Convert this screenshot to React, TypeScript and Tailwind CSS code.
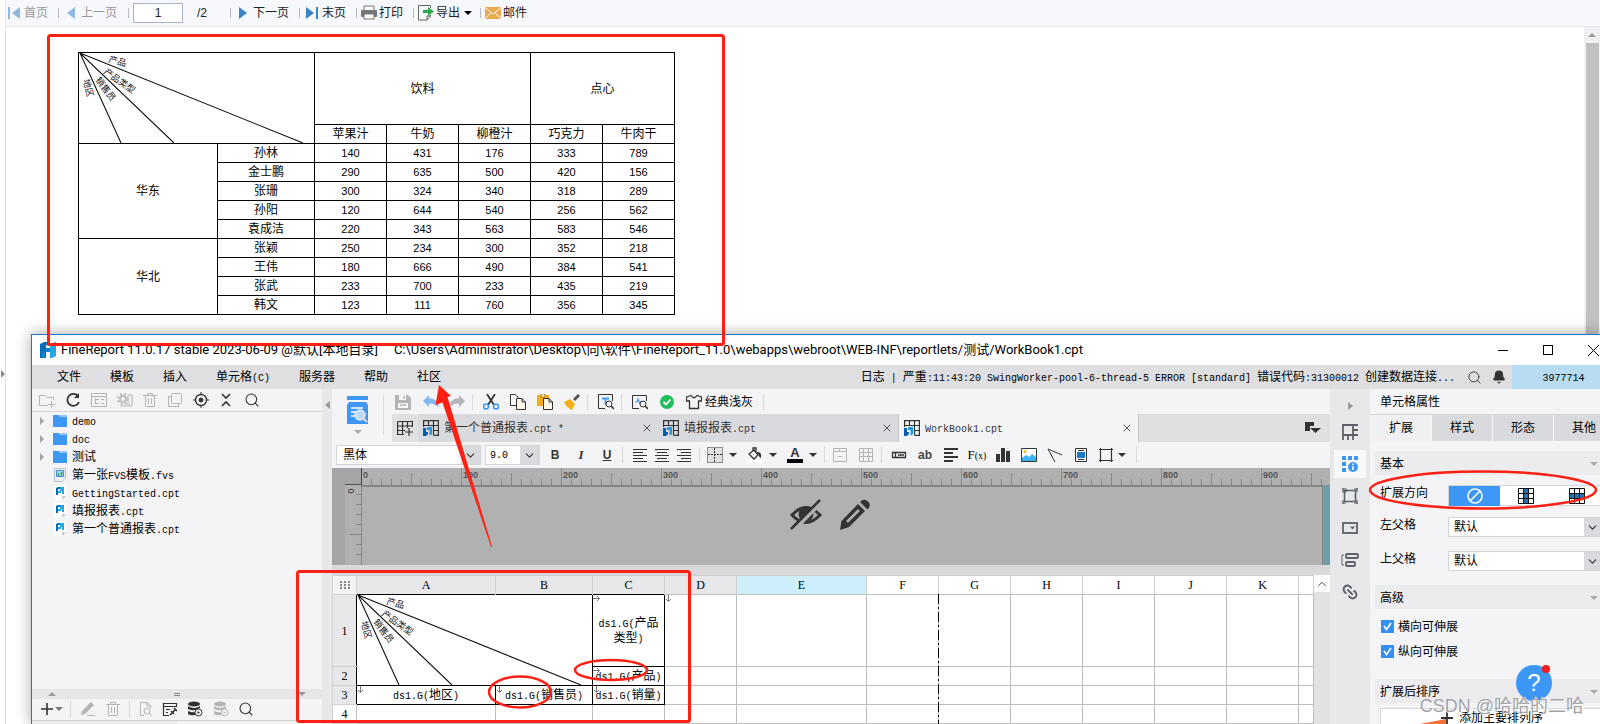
import type { ReactNode } from "react";
import clsx from "clsx";
import { Bell, ChevronDown, ChevronUp, Link2, Search, X } from "lucide-react";

const SIM = "font-['Liberation_Sans','Noto_Sans_CJK_SC',sans-serif]";

const PEOPLE = [
  { region: "华东", span: 5, name: "孙林", values: [140, 431, 176, 333, 789] },
  { name: "金士鹏", values: [290, 635, 500, 420, 156] },
  { name: "张珊", values: [300, 324, 340, 318, 289] },
  { name: "孙阳", values: [120, 644, 540, 256, 562] },
  { name: "袁成洁", values: [220, 343, 563, 583, 546] },
  { region: "华北", span: 4, name: "张颖", values: [250, 234, 300, 352, 218] },
  { name: "王伟", values: [180, 666, 490, 384, 541] },
  { name: "张武", values: [233, 700, 233, 435, 219] },
  { name: "韩文", values: [123, 111, 760, 356, 345] },
];

const MENUS = ["文件", "模板", "插入", "单元格(C)", "服务器", "帮助", "社区"];

const FILES = [
  { kind: "folder", name: "demo" },
  { kind: "folder", name: "doc" },
  { kind: "folder", name: "测试" },
  { kind: "fvs", name: "第一张FVS模板.fvs" },
  { kind: "cpt", name: "GettingStarted.cpt" },
  { kind: "cpt", name: "填报报表.cpt" },
  { kind: "cpt", name: "第一个普通报表.cpt" },
];

// Latin runs sit in a half-width monospace next to 12px Chinese glyphs
function Mix({ text }: { text: string }) {
  return (
    <span className="whitespace-pre">
      {text.split(/([!-~ ]+)/).map((part, i) =>
        i % 2 ? (
          <span key={i} className="font-['Liberation_Mono',monospace] text-[10px] leading-none">{part}</span>
        ) : (
          part
        ),
      )}
    </span>
  );
}

function Glyph({ children, className }: { children: ReactNode; className?: string }) {
  return (
    <svg viewBox="0 0 16 16" fill="none" stroke="#333" className={clsx("size-4 shrink-0", className)} aria-hidden="true">
      {children}
    </svg>
  );
}

function Tool({ label, w, children }: { label: string; w: string; children: ReactNode }) {
  return (
    <button type="button" aria-label={label} className={clsx("flex h-5 shrink-0 items-center justify-center", w)}>
      {children}
    </button>
  );
}

function Sep({ className = "h-4 bg-[#d8d8da]" }: { className?: string }) {
  return <span className={clsx("w-px shrink-0", className)} />;
}

function Caret({ className = "border-t-[#333]" }: { className?: string }) {
  return <span className={clsx("size-0 shrink-0 border-x-4 border-t-4 border-x-transparent", className)} />;
}

function Bin() {
  return (
    <Glyph>
      <path d="M1 3.500 H15 M5.500 3 V1.500 H10.500 V3 M3.500 4 V14.500 H12.500 V4 M6.500 6 V12 M9.500 6 V12" stroke="#b5b5b8" />
    </Glyph>
  );
}

function Logo({ className }: { className?: string }) {
  return (
    <svg viewBox="0 0 16 16" className={className} aria-hidden="true">
      <path d="M0 2 L4 0 H7 V3 H6 V16 H0 Z" fill="#0a6cb8" />
      <path d="M7 1 H12 L16 0 V14 L12 16 H10 V10 H6 V6 H10 V4 H7 Z" fill="#1fa8e8" />
      <path d="M2 9 H6 V6 H10 V10 H5 V16 H2 Z" fill="#0f82d0" />
    </svg>
  );
}

function Slanted() {
  return (
    <svg viewBox="0 0 235 90" className="block h-[90px] w-[235px]" fontSize="9" fill="#111">
      <path d="M1 0 L42 90 M1 0 L95 90 M1 0 L224 90" stroke="#111" strokeWidth="1.1" />
      <text transform="translate(29 9) rotate(15)">产品</text>
      <text transform="translate(24 20) rotate(35)">产品类型</text>
      <text transform="translate(16 27) rotate(53)">销售员</text>
      <text transform="translate(4 27) rotate(75)">地区</text>
    </svg>
  );
}

function PageArrow({ bar, flip, dim }: { bar?: boolean; flip?: boolean; dim?: boolean }) {
  const fill = dim ? "#92b8e2" : "#3b82c8";
  return (
    <svg viewBox={bar ? "0 0 12 12" : "0 0 8 12"} className={clsx("h-3 shrink-0", bar ? "w-3" : "w-2", flip && "-scale-x-100")} aria-hidden="true">
      <path d="M0 0 L8 6 L0 12 Z" fill={fill} />
      {bar && <rect x="10" y="0" width="2" height="12" fill={fill} />}
    </svg>
  );
}

function PreviewBar() {
  const sep = <Sep className="h-2.5 bg-[#b8babf]" />;
  return (
    <div className="ml-[5px] flex h-[27px] items-center border-b border-l border-[#e4e6ea] bg-[#f6f8fb] pl-0.5 text-xs text-[#222]">
      <button type="button" className="flex w-[50px] items-center gap-1 text-[#999]"><PageArrow bar flip dim />首页</button>
      {sep}
      <button type="button" className="ml-2 flex w-[61px] items-center gap-1.5 text-[#999]"><PageArrow flip dim />上一页</button>
      {sep}
      <input aria-label="页码" defaultValue="1" className="ml-1 h-5 w-[50px] border border-[#a9b1c9] bg-white text-center text-xs" />
      <span className="ml-3.5 w-[33px]">/2</span>
      {sep}
      <button type="button" className="ml-2 flex w-[60px] items-center gap-1.5"><PageArrow />下一页</button>
      {sep}
      <button type="button" className="ml-1.5 flex w-[50px] items-center gap-1"><PageArrow bar />末页</button>
      {sep}
      <button type="button" className="ml-1 flex w-[52px] items-center gap-0.5">
        <Glyph>
          <path d="M3 5 V1 H13 V5" stroke="#777" />
          <rect x="0" y="5" width="16" height="7" rx="1" fill="#777" stroke="none" />
          <rect x="3" y="9" width="10" height="5" fill="#fff" stroke="#777" />
        </Glyph>
        打印
      </button>
      {sep}
      <button type="button" className="ml-1 flex w-[62px] items-center gap-0.5">
        <Glyph>
          <path d="M12.500 10 V11 L9 15 H.5 V.5 H12.500 V3 M9 15 V11 H13" stroke="#666" />
          <path d="M5 5 H10 V2 L16 6.500 L10 11 V8 H5 Z" fill="#2faa4a" stroke="none" />
        </Glyph>
        导出
        <Caret className="ml-0.5 border-t-black" />
      </button>
      {sep}
      <button type="button" className="ml-1 flex items-center gap-0.5">
        <Glyph>
          <rect x="0" y="2" width="16" height="12" fill="#eaa94c" stroke="none" />
          <path d="M0 2.500 L8 9 L16 2.500 M0 13.500 L6 8 M16 13.500 L10 8" stroke="#fff" />
        </Glyph>
        邮件
      </button>
    </div>
  );
}

function ReportTable() {
  const cell = "border border-black p-0 text-center font-normal";
  return (
    <table className="w-[597px] table-fixed border-collapse text-xs leading-4 text-black">
      <colgroup>
        <col className="w-[139px]" />
        <col className="w-[97px]" />
        {[0, 1, 2, 3, 4].map(i => <col key={i} className="w-[72px]" />)}
      </colgroup>
      <thead>
        <tr className="h-[72px]">
          <th colSpan={2} rowSpan={2} className={cell}><Slanted /></th>
          <th colSpan={3} className={cell}>饮料</th>
          <th colSpan={2} className={cell}>点心</th>
        </tr>
        <tr className="h-[19px]">
          {["苹果汁", "牛奶", "柳橙汁", "巧克力", "牛肉干"].map(p => <th key={p} className={cell}>{p}</th>)}
        </tr>
      </thead>
      <tbody>
        {PEOPLE.map(p => (
          <tr key={p.name} className="h-[19px]">
            {p.region && <th rowSpan={p.span} className={cell}>{p.region}</th>}
            <td className={cell}>{p.name}</td>
            {p.values.map((v, i) => <td key={i} className={clsx(cell, "text-[11px]")}>{v}</td>)}
          </tr>
        ))}
      </tbody>
    </table>
  );
}

function FileIcon({ kind }: { kind: string }) {
  if (kind === "folder") {
    return (
      <Glyph>
        <path d="M1 2 H7 L8 4 H15 V14 H1 Z" fill="#3d97f7" stroke="none" />
        <path d="M8 3 H15" stroke="#3d97f7" />
      </Glyph>
    );
  }
  if (kind === "fvs") {
    return (
      <Glyph>
        <path d="M2.500 1.500 H13.500 V11 L10 14.500 H2.500 Z" fill="#eef1f3" stroke="#b9c0c6" />
        <path d="M4.500 3.500 H11.500 V9.500 H4.500 Z" fill="#a9d8f5" stroke="#3f8fd0" />
        <path d="M6.500 9 V6 M9.500 9 V5" stroke="#3aa757" strokeWidth="1.500" />
      </Glyph>
    );
  }
  return (
    <Glyph>
      <path d="M2 0 H14 V11 L10 15 H2 Z" fill="#fff" stroke="none" />
      <path d="M4 3 L6 2 H8 V4 H6 V10 H4 Z" fill="#0a6cb8" stroke="none" />
      <path d="M8 2 H12 V9 H10 V6 H8 Z M6 6 H9 V8 H6 Z" fill="#1fa8e8" stroke="none" />
      <path d="M10 15 V11 H14 Z" fill="#c9ccd0" stroke="none" />
    </Glyph>
  );
}

function FilePanel() {
  return (
    <aside className="flex w-[290px] shrink-0 flex-col bg-[#f4f4f7]">
      <div className="flex h-[23px] items-center border-b border-[#d5d5d8] pl-0.5">
        <Tool label="新建文件夹" w="w-[26px]">
          <Glyph><path d="M9 13.500 H.5 V3.500 H6 L8 5.500 H14.500 V8 M12.500 9 V16 M9 12.500 H16" stroke="#b5b5b8" /></Glyph>
        </Tool>
        <Tool label="刷新" w="w-[26px]">
          <Glyph><path d="M13 4 A6 6 0 1 0 14 10" strokeWidth="1.8" /><path d="M14 1 V6 H9 Z" fill="#333" stroke="none" /></Glyph>
        </Tool>
        <Tool label="重命名" w="w-[26px]">
          <Glyph><path d="M.5 1.500 H15.500 V14.500 H.5 Z M.5 4.500 H15.500 M4.500 6 V12 M4.500 7.500 H8 M4.500 11.500 H8 M10 7.500 H13 M10 11.500 H13" stroke="#b5b5b8" /></Glyph>
        </Tool>
        <Tool label="设置" w="w-[26px]">
          <Glyph>
            <circle cx="6" cy="7" r="3" stroke="#b5b5b8" strokeWidth="1.5" />
            <circle cx="6" cy="7" r="5" stroke="#b5b5b8" strokeWidth="2" strokeDasharray="2 2" />
            <path d="M11 3 H15 V14 H3 M11 9 V11 M9 12 H13" stroke="#b5b5b8" />
          </Glyph>
        </Tool>
        <Tool label="删除" w="w-[24px]"><Bin /></Tool>
        <Tool label="复制" w="w-[26px]">
          <Glyph><rect x="4.500" y="1.500" width="10" height="10" rx="1" stroke="#b5b5b8" /><path d="M4 4.500 H1.500 V14.500 H11.500 V12" stroke="#b5b5b8" /></Glyph>
        </Tool>
        <Tool label="定位" w="w-[25px]">
          <Glyph><circle cx="8" cy="8" r="5.500" strokeWidth="1.400" /><circle cx="8" cy="8" r="2" fill="#333" /><path d="M8 0 V3 M8 13 V16 M0 8 H3 M13 8 H16" /></Glyph>
        </Tool>
        <Tool label="折叠" w="w-[26px]">
          <Glyph><path d="M4 2 L8 6 L12 2 M4 14 L8 10 L12 14" strokeWidth="1.600" /></Glyph>
        </Tool>
        <Tool label="搜索" w="w-[26px]"><Search size={16} strokeWidth={1.6} color="#333" /></Tool>
      </div>
      <ul className="min-h-0 flex-1 overflow-hidden text-xs text-black">
        {FILES.map(f => (
          <li key={f.name} className="flex h-[18px] items-center">
            <span className="flex w-5 justify-center">
              {f.kind === "folder" && <span className="size-0 border-y-4 border-l-4 border-y-transparent border-l-[#a5a5a8]" />}
            </span>
            <FileIcon kind={f.kind} />
            <span className="ml-1"><Mix text={f.name} /></span>
          </li>
        ))}
      </ul>
      <div className="flex h-2.5 items-center justify-between bg-[#e6e6e8] px-4">
        <Caret className="rotate-180 border-t-[#999]" />
        <span className="h-[3px] w-1.5 border-y border-[#888]" />
        <Caret className="border-t-[#999]" />
      </div>
      <div className="flex h-[22px] items-center border-b border-[#cfcfd2] pb-px pl-1.5">
        <Tool label="添加" w="w-[26px]">
          <Glyph className="-mr-0.5"><path d="M8 2 V14 M2 8 H14" strokeWidth="1.600" /></Glyph>
          <Caret className="ml-0.5 border-t-[#777]" />
        </Tool>
        <Sep className="ml-1.5 h-4 bg-[#d8d8da]" />
        <Tool label="编辑" w="ml-1 w-[26px]">
          <Glyph><path d="M1 14 L2 10 L11 1 L14 4 L5 13 Z" fill="#b5b5b8" stroke="none" /><path d="M7 14.500 H15" stroke="#b5b5b8" /></Glyph>
        </Tool>
        <Tool label="删除数据集" w="w-[24px]"><Bin /></Tool>
        <Sep className="ml-1 h-4 bg-[#d8d8da]" />
        <Tool label="预览" w="ml-1 w-[24px]">
          <Glyph><path d="M6 14.500 H2.500 V1.500 H9 L13 5 V7 M9 1.500 V5 H13" stroke="#b5b5b8" /><circle cx="9" cy="10" r="3" stroke="#b5b5b8" /><path d="M11 12 L14 15" stroke="#b5b5b8" /></Glyph>
        </Tool>
        <Tool label="连接" w="w-[24px]">
          <Glyph><path d="M7 14.500 H1.500 V2.500 H14.500 V6 M1.500 5.500 H14.500 M4 8.500 H8 M4 11.500 H6" strokeWidth="1.200" /><path d="M8 14 L14 8 M9 10 L12 13 M12 7 L15 10" strokeWidth="1.600" /></Glyph>
        </Tool>
        {["#333", "#b5b5b8"].map(c => (
          <Tool key={c} label="数据库" w="w-[26px]">
            <Glyph>
              <ellipse cx="7" cy="3" rx="6" ry="2.500" fill={c} stroke="none" />
              <path d="M1 5 Q7 9 13 5 V7 Q7 11 1 8 Z M1 10 Q6 12 8 11 V14 Q3 15 1 13 Z" fill={c} stroke="none" />
              <circle cx="11.500" cy="11.500" r="3.500" fill="#f4f4f7" stroke={c} />
              <path d="M10.500 10 L13 11.500 L10.500 13 Z" fill={c} stroke="none" />
            </Glyph>
          </Tool>
        ))}
        <Tool label="查找" w="w-[24px]"><Search size={16} strokeWidth={1.6} color="#333" /></Tool>
      </div>
      <div className="h-[3px] w-[145px] bg-[#ececee]" />
    </aside>
  );
}

function SheetIcon() {
  return (
    <Glyph className="size-3.5">
      <path d="M.6 7 V.6 H15.400 V15.400 H11 M.6 5.500 H15.400 M5.500 .6 V6 M10.500 .6 V15.400 M10.500 10.500 H15.400" strokeWidth="1.200" />
      <path d="M0 8 H3 V12 H5 V14 L3 16 H0 Z" fill="#0a5cb0" stroke="none" />
      <path d="M4 7 H9 V14 L6.500 16 V10 H4 Z" fill="#1f9ae0" stroke="none" />
    </Glyph>
  );
}

function DocTab({ name, active, width }: { name: string; active?: boolean; width: string }) {
  return (
    <div className={clsx("flex shrink-0 items-center pl-[5px] pr-[5px] text-xs", width, active ? "border-x border-[#c5c5c8] bg-[#f4f4f7]" : "bg-[#d9dadd]")}>
      <SheetIcon />
      <button type="button" className="ml-[5px] flex-1 text-left text-[#333]"><Mix text={name} /></button>
      <button type="button" aria-label="关闭"><X size={12} strokeWidth={1.8} color="#444" /></button>
    </div>
  );
}

function MainTools() {
  return (
    <div className="flex h-[53px] bg-[#f4f4f7]">
      <button type="button" aria-label="预览模板" className="flex w-[51px] shrink-0 flex-col items-center gap-1.5 pt-[7px]">
        <svg viewBox="0 0 21 28" className="h-7 w-[21px]" aria-hidden="true">
          <path d="M0 0 H21 V4 H0 Z M2 6 H19 L21 9 V28 H0 V9 Z" fill="#3d97f7" />
          <path d="M4 12 H16 M4 16 H9 M4 20 H8" stroke="#fff" strokeWidth="1.500" />
          <circle cx="13" cy="19" r="5" fill="#bcdcff" stroke="#e8e8e8" strokeWidth="1.500" />
          <path d="M16 22 L20 26" stroke="#ddd" strokeWidth="2" />
        </svg>
        <Caret className="border-t-[#aaa]" />
      </button>
      <Sep className="mt-1.5 h-10 bg-[#d8d8da]" />
      <div className="ml-2 flex min-w-0 flex-1 flex-col">
        <div className="flex h-[25px] shrink-0 items-center">
          <Tool label="保存" w="w-[22px]">
            <Glyph><path d="M0 1 H13 L16 4 V16 H0 Z" fill="#b5b5b8" stroke="none" /><path d="M4 1 H11 V6 H4 Z M3 9 H13 V14 H3 Z" fill="#f4f4f7" stroke="none" /><path d="M9 2 V5 M5 11 H11" stroke="#b5b5b8" strokeWidth="1.500" /></Glyph>
          </Tool>
          <Tool label="撤销" w="ml-1.5 w-[22px]">
            <Glyph><path d="M0 7 L6 1 V4.500 Q15 4 16 14 Q12 9 6 9.500 V13 Z" fill="#7fb7f2" stroke="none" /></Glyph>
          </Tool>
          <Tool label="重做" w="ml-1 w-[22px]">
            <Glyph><path d="M16 7 L10 1 V4.500 Q1 4 0 14 Q4 9 10 9.500 V13 Z" fill="#b5b5b8" stroke="none" /></Glyph>
          </Tool>
          <Sep className="ml-1 h-4 bg-[#d8d8da]" />
          <Tool label="剪切" w="ml-1 w-[27px]">
            <Glyph><path d="M4 0 L11 11 M12 0 L5 11" strokeWidth="1.800" /><circle cx="3" cy="12.500" r="2.500" stroke="#3d97f7" strokeWidth="1.600" /><circle cx="13" cy="12.500" r="2.500" stroke="#3d97f7" strokeWidth="1.600" /></Glyph>
          </Tool>
          <Tool label="复制" w="w-[27px]">
            <Glyph><path d="M.5 .5 H5 L8 3 V11.500 H.5 Z" fill="#fff" /><path d="M6.500 4.500 H12 L15.500 8 V15.500 H6.500 Z" fill="#fff8e8" /><path d="M12 4.500 V8 H15.500" /></Glyph>
          </Tool>
          <Tool label="粘贴" w="w-[27px]">
            <Glyph><path d="M0 1 H12 V12 H0 Z" fill="#f5ad13" stroke="none" /><path d="M4 0 H8 V3 H4 Z" fill="#fff" stroke="#a87912" /><path d="M6.500 4.500 H12 L15.500 8 V15.500 H6.500 Z M12 4.500 V8 H15.500" fill="#fff8e8" /></Glyph>
          </Tool>
          <Tool label="格式刷" w="w-[27px]">
            <Glyph><path d="M15 1 L10 6" strokeWidth="3" stroke="#555" /><path d="M0 8 L6 5 L11 10 L8 16 Q3 14 0 8 Z" fill="#f5ad13" stroke="none" /></Glyph>
          </Tool>
          <Sep className="ml-0.5 h-4 bg-[#d8d8da]" />
          <Tool label="查找替换" w="ml-1 w-[27px]">
            <Glyph><path d="M7 14.500 H.5 V.5 H14.500 V7" /><path d="M4 4.500 H11 M7.500 4.500 V11" stroke="#3d97f7" strokeWidth="1.800" /><circle cx="11" cy="10" r="3" fill="#f4f4f7" /><path d="M13 12 L16 15" strokeWidth="1.600" /></Glyph>
          </Tool>
          <Sep className="ml-0.5 h-4 bg-[#d8d8da]" />
          <Tool label="性能" w="ml-1 w-[27px]">
            <Glyph><path d="M7 14.500 H.5 V1.500 H14.500 V7" /><path d="M3 8 H5 L6 5 L8 10 L9 7" stroke="#3d97f7" strokeWidth="1.200" /><circle cx="11" cy="10" r="3" fill="#f4f4f7" /><path d="M13 12 L16 15" strokeWidth="1.600" /></Glyph>
          </Tool>
          <Tool label="校验" w="w-[27px]">
            <Glyph><circle cx="8" cy="8" r="7" fill="#20bd5c" stroke="none" /><path d="M4.500 8 L7 10.500 L11.500 5.500" stroke="#fff" strokeWidth="1.800" /></Glyph>
          </Tool>
          <button type="button" className="ml-1.5 flex items-center gap-[3px] text-xs text-black">
            <Glyph><path d="M5 1.500 L.5 3 V7 H3.500 V14.500 H12.500 V7 H15.500 V3 L11 1.500 Q8 6 5 1.500 Z" strokeWidth="1.300" /></Glyph>
            经典浅灰
          </button>
          <Sep className="ml-2.5 h-4 bg-[#d8d8da]" />
        </div>
        <div className="flex h-7 bg-[#e0e0e2]">
          <Tool label="新建模板" w="w-[26px] h-7">
            <Glyph className="size-3.5"><path d="M.6 1.500 H15.400 V7 M.6 1.500 V14.500 H7 M.6 6 H15 M.6 10.500 H8 M5.500 1 V14 M10.500 1 V8 M12 8 V16 M8 12 H16" strokeWidth="1.200" /></Glyph>
          </Tool>
          <DocTab name="第一个普通报表.cpt *" width="w-[240px]" />
          <DocTab name="填报报表.cpt" width="w-[240px]" />
          <DocTab name="WorkBook1.cpt" width="w-[241px]" active />
          <Tool label="模板列表" w="ml-auto mr-2.5 mt-1 w-3.5">
            <Glyph className="size-3.5"><path d="M0 2 H9 V6 H5 V11 H0 Z M5 8 H16 L10.500 13 Z" fill="#333" stroke="none" /></Glyph>
          </Tool>
        </div>
      </div>
    </div>
  );
}

function FontBar() {
  const lines = ["M1 2.500 H15 M1 5.500 H11 M1 8.500 H15 M1 11.500 H11 M1 14.500 H15", "M1 2.500 H15 M3 5.500 H13 M1 8.500 H15 M3 11.500 H13 M1 14.500 H15", "M1 2.500 H15 M5 5.500 H15 M1 8.500 H15 M5 11.500 H15 M1 14.500 H15"];
  return (
    <div className="flex h-[26px] items-center bg-[#f4f4f7] pl-1">
      <label className="relative flex h-5 w-[145px] border border-[#d5d6da] bg-white">
        <select aria-label="字体" className="w-full appearance-none pl-1.5 text-xs leading-4 text-black"><option>黑体</option></select>
        <span className="pointer-events-none absolute inset-y-0 right-0 flex w-[19px] items-center justify-center bg-[#d9dadd]"><ChevronDown size={13} color="#333" /></span>
      </label>
      <label className="relative ml-1 flex h-5 w-[55px] border border-[#d5d6da] bg-white">
        <select aria-label="字号" className="w-full appearance-none pl-1 font-['Liberation_Mono',monospace] text-[10px] text-black"><option>9.0</option></select>
        <span className="pointer-events-none absolute inset-y-0 right-0 flex w-[19px] items-center justify-center bg-[#d9dadd]"><ChevronDown size={13} color="#333" /></span>
      </label>
      <button type="button" className="ml-0.5 w-[26px] text-xs font-bold text-[#333]">B</button>
      <button type="button" className="w-[26px] font-['Liberation_Serif',serif] text-[13px] font-bold italic text-[#333]">I</button>
      <button type="button" className="w-[26px] text-xs font-bold text-[#333] underline">U</button>
      <Sep className="ml-0.5 h-4 bg-[#d8d8da]" />
      <span className="w-1.5" />
      {lines.map((d, i) => <Tool key={d} label={["左对齐", "居中", "右对齐"][i]} w="w-[22px]"><Glyph><path d={d} strokeWidth="1.200" /></Glyph></Tool>)}
      <Sep className="ml-1 h-4 bg-[#d8d8da]" />
      <Tool label="边框" w="ml-2 w-7">
        <Glyph><path d="M.5 .5 H15.500 V15.500 H.5 Z" strokeDasharray="1 1" fill="#e2e2e4" /><path d="M7.500 1 V15 M1 7.500 H15" strokeDasharray="2 1" /></Glyph>
        <Caret className="ml-1.5 border-t-[#333]" />
      </Tool>
      <Tool label="背景" w="ml-3 w-7">
        <Glyph><path d="M2 7 L7 3 L11 8 L7 12 Z M6 5 V1 H9 V5" strokeWidth="1.300" /><path d="M10 5 Q15 4 14 11 Q12 10 11 7 Z" fill="#333" stroke="none" /><path d="M0 14.500 H16" stroke="#fff" strokeWidth="3" /></Glyph>
        <Caret className="ml-1.5 border-t-[#333]" />
      </Tool>
      <Tool label="文字颜色" w="ml-3 w-7">
        <span className="flex w-4 shrink-0 flex-col items-center border-b-4 border-black text-[13px] font-bold leading-3 text-[#333]">A</span>
        <Caret className="ml-1.5 border-t-[#333]" />
      </Tool>
      <Sep className="ml-2 h-4 bg-[#d8d8da]" />
      <Tool label="合并" w="ml-0.5 w-[26px]"><Glyph><path d="M1.500 1.500 H14.500 V14.500 H1.500 Z M1 4.500 H15 M6 9.500 H10 M7.500 1 V4" stroke="#b5b5b8" /></Glyph></Tool>
      <Tool label="拆分" w="w-[26px]"><Glyph><path d="M1.500 1.500 H14.500 V14.500 H1.500 Z M1 5.500 H15 M1 9.500 H15 M5.500 1 V15 M10.500 1 V15" stroke="#b5b5b8" /></Glyph></Tool>
      <Sep className="ml-0.5 h-4 bg-[#d8d8da]" />
      <Tool label="数据列" w="ml-1 w-[26px]"><Glyph><path d="M1.500 5.500 H14.500 V10.500 H1.500 Z M4.500 6 V10 M7 8 H13" strokeWidth="1.300" /></Glyph></Tool>
      <Tool label="普通文本" w="w-[26px]"><span className="text-xs font-bold text-[#444]">ab</span></Tool>
      <Tool label="富文本" w="w-[26px]"><Glyph><path d="M1 2 H15 M1 6 H10 M1 10 H15 M1 14 H10" strokeWidth="1.800" /></Glyph></Tool>
      <Tool label="公式" w="w-[26px]"><span className="font-['Liberation_Serif',serif] text-[13px] text-black">F<span className="text-[10px]">(x)</span></span></Tool>
      <Tool label="图表" w="w-[26px]"><Glyph><path d="M1 7 H5 V15 H1 Z M6 1 H10 V15 H6 Z M11 4 H15 V15 H11 Z" fill="#333" stroke="none" /></Glyph></Tool>
      <Tool label="图片" w="w-[26px]"><Glyph><path d="M.5 1.500 H15.500 V14.500 H.5 Z" fill="#fff" /><path d="M1 14 V11 L5 8 L8 10 L11 7 L15 10 V14 Z" fill="#39b5f5" stroke="none" /><circle cx="4" cy="4.500" r="1.500" fill="#f7b52a" stroke="none" /></Glyph></Tool>
      <Tool label="斜线" w="w-[26px]"><Glyph><path d="M1 2 L8 15 M1 2 L15 8" /></Glyph></Tool>
      <Tool label="子报表" w="w-[26px]"><Glyph><path d="M2.500 1.500 H13.500 V14.500 H2.500 Z M5 3.500 H11 M5 12.500 H11" fill="#fff" /><path d="M4 5 H12 V11 H4 Z" fill="#1d79d0" stroke="none" /></Glyph></Tool>
      <Tool label="悬浮元素" w="ml-1 w-7">
        <Glyph><path d="M2.500 1 V15 M13.500 1 V15 M1 2.500 H15 M1 13.500 H15" strokeWidth="1.200" /></Glyph>
        <Caret className="ml-1 border-t-[#333]" />
      </Tool>
      <Sep className="ml-2.5 h-4 bg-[#d8d8da]" />
    </div>
  );
}

function Canvas() {
  const ticks = Array.from({ length: 97 }, (_, i) => i);
  return (
    <div className="flex h-[97px] bg-[#a5a5a6]">
      <div className="w-[13px]" />
      <svg className="h-full w-4 shrink-0" aria-hidden="true">
        <rect y="17" width="16" height="80" fill="#b0b0b0" />
        <path d="M0 16.500 H16" stroke="#555" />
        <text transform="translate(9 23) rotate(-90)" fontSize="9" fill="#333" textAnchor="middle">0</text>
        {[1, 2, 3, 4, 5, 6, 7].map(i => <path key={i} d={`M${i === 5 ? 5 : 11} ${16.5 + i * 10} H16`} stroke="#888" />)}
      </svg>
      <div className="flex min-w-0 flex-1 flex-col">
        <svg className="h-[17px] w-full overflow-hidden bg-[#b0b0b0]" aria-hidden="true">
          {ticks.map(i => (
            <path key={i} d={`M${i * 10 + 0.5} ${i % 10 === 0 ? 0 : i % 5 === 0 ? 5 : 11} V17`} stroke={i ? "#8a8a8a" : "#444"} />
          ))}
          {ticks.filter(i => i % 10 === 0).map(i => (
            <text key={i} x={i * 10 + 2} y="10" fontSize="9" fontWeight="bold" fill="#555">{i * 10}</text>
          ))}
        </svg>
        <div className="flex flex-1">
          <div className="flex flex-1 justify-center gap-[17px] border-l border-t-2 border-r border-[#858585] bg-[#b1b1b1] pr-6 pt-3">
            <svg viewBox="0 0 32 31" className="h-[31px] w-8" aria-hidden="true">
              <path d="M2 16 Q16 1 30 16 Q16 31 2 16 Z" fill="none" stroke="#333" strokeWidth="3" />
              <circle cx="16" cy="15" r="7.500" fill="#333" />
              <path d="M3 31 L33 1" stroke="#b1b1b1" strokeWidth="5" />
              <path d="M1 30 L30 1" stroke="#333" strokeWidth="2.500" />
            </svg>
            <svg viewBox="0 0 32 32" className="size-8" aria-hidden="true">
              <path d="M1 31 L2.500 22 L19 5 L26 12 L10 28 Z" fill="#333" />
              <path d="M21 3 Q25 -1 29 2.500 Q33 6 28.500 10.500 Z" fill="#333" />
              <path d="M8 23 L20 11" stroke="#b1b1b1" strokeWidth="2.500" />
            </svg>
          </div>
          <div className="w-[7px] bg-[#6f9fab]" />
        </div>
      </div>
    </div>
  );
}

function Expand({ down }: { down?: boolean }) {
  return (
    <svg viewBox="0 0 7 7" className={clsx("absolute left-0 top-0 size-[7px]", down && "rotate-90")} aria-hidden="true">
      <path d="M0 3.500 H6 M4 1 L6.500 3.500 L4 6" fill="none" stroke="#777" />
    </svg>
  );
}

function Sheet() {
  const head = "border-x border-t border-[#d0d0d3] p-0 font-['Liberation_Serif',serif] font-normal text-black";
  const row = "border-y border-l border-[#d0d0d3] p-0 text-center font-['Liberation_Serif',serif] font-normal text-black";
  const td = "border border-[#bdbdbd] p-0";
  const ink = "relative border border-black p-0 text-center leading-[15px]";
  // cells right of the inked block must not paint over its black edge
  const blanks = (from: number) =>
    Array.from({ length: 13 - from }, (_, i) => <td key={i} className={td} />);
  return (
    <div className="flex min-h-0 flex-1 overflow-hidden bg-white">
      <div className="relative min-w-0 flex-1">
        <table className="w-full table-fixed border-collapse text-xs leading-4">
          <colgroup>
            <col className="w-6" /><col className="w-[139px]" /><col className="w-[97px]" /><col className="w-[72px]" />
            <col className="w-[72px]" /><col className="w-[130px]" />
            {[0, 1, 2, 3, 4, 5].map(i => <col key={i} className="w-[72px]" />)}
            <col />
          </colgroup>
          <thead>
            <tr className="h-[19px]">
              <th className={clsx(head, "bg-[#f4f4f7]")}>
                <svg viewBox="0 0 10 8" className="mx-auto block h-2 w-2.5" aria-hidden="true">
                  <path d="M0 1 H10 M0 4 H10 M0 7 H10" stroke="#888" strokeWidth="2" strokeDasharray="2 2" />
                </svg>
              </th>
              {[..."ABCDEFGHIJK"].map(c => (
                <th key={c} className={clsx(head, c === "E" ? "bg-[#cdeffb]" : c < "E" ? "bg-[#e8e8ea]" : "bg-white")}>{c}</th>
              ))}
              <th className={head} />
            </tr>
          </thead>
          <tbody>
            <tr className="h-[72px]">
              <th className={clsx(row, "bg-[#e8e8ea]")}>1</th>
              <td colSpan={2} rowSpan={2} className={ink}><Slanted /></td>
              <td className={ink}><Expand /><Mix text={"ds1.G(产品"} /><br /><Mix text="类型)" /></td>
              <td className={clsx(td, "relative")}><Expand down /></td>
              {blanks(5)}
            </tr>
            <tr className="h-[19px]">
              <th className={clsx(row, "bg-[#e8e8ea]")}>2</th>
              <td className={ink}><Expand /><Mix text="ds1.G(产品)" /></td>
              {blanks(4)}
            </tr>
            <tr className="h-[19px]">
              <th className={clsx(row, "bg-[#e8e8ea]")}>3</th>
              <td className={ink}><Expand down /><Mix text="ds1.G(地区)" /></td>
              <td className={ink}><Expand down /><Mix text="ds1.G(销售员)" /></td>
              <td className={ink}><Expand down /><Mix text="ds1.G(销量)" /></td>
              {blanks(4)}
            </tr>
            <tr className="h-[19px]">
              <th className={clsx(row, "bg-white")}>4</th>
              {blanks(1)}
            </tr>
          </tbody>
        </table>
        {/* print page boundary */}
        <svg className="absolute bottom-0 left-[606px] top-[19px] h-full w-px" aria-hidden="true">
          <path d="M.5 0 V200" stroke="#000" strokeDasharray="10 3 2 3" />
        </svg>
      </div>
      <div className="w-4 bg-[#e2e2e4]">
        <button type="button" aria-label="向上滚动" className="flex h-[17px] w-full items-center justify-center bg-white"><ChevronUp size={14} strokeWidth={1.5} color="#333" /></button>
      </div>
    </div>
  );
}

function SideStrip() {
  const s = "#5c6068";
  return (
    <nav aria-label="属性面板" className="flex w-10 shrink-0 flex-col items-center bg-[#e8e8ea]">
      <span className="mt-[13px] size-0 border-y-4 border-l-[5px] border-y-transparent border-l-[#999]" />
      <Tool label="单元格元素" w="mt-1.5 h-8 w-8">
        <Glyph><path d="M1 16 V1 H16 M1 11 H16 M11 1 V16 M6 11 V16 M11 6 H16" stroke={s} strokeWidth="1.800" /></Glyph>
      </Tool>
      <button type="button" aria-label="单元格属性" className="mt-0.5 flex h-7 w-8 items-center justify-center bg-[#f8f8fa]">
        <Glyph>
          <path d="M0 0 H4 V4 H0 Z M6 0 H10 V4 H6 Z M12 0 H16 V4 H12 Z M0 6 H4 V10 H0 Z M0 12 H4 V16 H0 Z" fill="#3d97f7" stroke="none" />
          <circle cx="11" cy="11" r="5" fill="#3d97f7" stroke="none" />
          <path d="M11 7.500 V9 M11 10 V14" stroke="#fff" strokeWidth="1.500" />
        </Glyph>
      </button>
      <Tool label="悬浮元素" w="mt-0.5 h-8 w-8">
        <Glyph>
          <path d="M2.500 2.500 H13.500 V13.500 H2.500 Z" stroke={s} strokeWidth="1.600" />
          <path d="M0 1 H4 V4 H1 V0 M12 1 H16 M15 0 V4 M0 15 H4 M1 12 V16 M12 15 H16 M15 12 V16" stroke={s} strokeWidth="1.200" />
        </Glyph>
      </Tool>
      <Tool label="控件设置" w="h-8 w-8"><Glyph><rect x="1" y="3" width="14" height="10" stroke={s} strokeWidth="1.800" /><path d="M8 6.500 H13 L10.500 9.500 Z" fill={s} stroke="none" /></Glyph></Tool>
      <Tool label="条件属性" w="h-8 w-8"><Glyph className="w-[18px]"><path d="M2 3 H0 V13 H2" stroke={s} /><rect x="4" y="2" width="12" height="4" rx="1" stroke={s} strokeWidth="1.800" /><rect x="4" y="10" width="9" height="4" rx="1" stroke={s} strokeWidth="1.800" /></Glyph></Tool>
      <Tool label="超级链接" w="h-8 w-8"><Link2 size={18} strokeWidth={2.6} color={s} className="rotate-45" /></Tool>
    </nav>
  );
}

function Section({ title }: { title: string }) {
  return (
    <h3 className="ml-[5px] flex h-6 items-center justify-between bg-[#ececee] pl-[5px] pr-0.5 pt-0.5 text-xs text-black">
      {title}
      <Caret className="border-t-[#aaa]" />
    </h3>
  );
}

function GridIcon({ across }: { across?: boolean }) {
  return (
    <Glyph>
      <path d={across ? "M0 5.500 H16 V10.500 H0 Z" : "M5.500 0 H10.500 V16 H5.500 Z"} fill="#2273ae" stroke="none" />
      <path d="M.5 .5 H15.500 V15.500 H.5 Z M.5 5.500 H15.500 M.5 10.500 H15.500 M5.500 .5 V15.500 M10.500 .5 V15.500" stroke="#111" />
    </Glyph>
  );
}

function ParentSelect({ id, label }: { id: string; label: string }) {
  return (
    <div className="flex h-[34px] items-start pl-2.5">
      <label htmlFor={id} className="w-[68px] shrink-0 text-xs leading-4 text-black">{label}</label>
      <div className="relative flex h-5 flex-1 border border-r-0 border-[#d5d6da] bg-white">
        <select id={id} className="w-full appearance-none pl-[5px] text-xs text-black"><option>默认</option></select>
        <span className="pointer-events-none absolute inset-y-0 right-0 flex w-4 items-center justify-center bg-[#d9dadd]"><ChevronDown size={13} color="#333" /></span>
      </div>
    </div>
  );
}

function Check({ label }: { label: string }) {
  return (
    <label className="flex h-[25px] items-center gap-1 pl-[11px] text-xs text-black">
      <span className="relative flex size-[13px]">
        <input type="checkbox" defaultChecked className="size-[13px] appearance-none bg-[#3390f0]" />
        <svg viewBox="0 0 13 13" className="pointer-events-none absolute inset-0" aria-hidden="true"><path d="M3 6 L5.500 9.500 L10 3" fill="none" stroke="#fff" strokeWidth="1.600" /></svg>
      </span>
      {label}
    </label>
  );
}

function PropertyPanel() {
  return (
    <aside className="w-[230px] shrink-0 overflow-hidden bg-[#f4f4f7]">
      <h2 className="h-[26px] border-b border-[#d5d5d8] pl-2.5 text-xs leading-[26px] text-black">单元格属性</h2>
      <div role="tablist" className="flex h-[26px] text-xs text-black">
        {["扩展", "样式", "形态", "其他"].map((t, i) => (
          <button key={t} type="button" role="tab" aria-selected={i === 0} className={clsx("w-[61px] shrink-0 border-l border-[#f4f4f7]", i === 0 ? "bg-[#f0f0f2]" : "bg-[#d9dadd]")}>{t}</button>
        ))}
      </div>
      <div className="h-2.5" />
      <Section title="基本" />
      <div className="flex h-[42px] items-start pl-2.5 pt-2.5">
        <span className="w-[68px] shrink-0 text-xs leading-4 text-black">扩展方向</span>
        <div className="flex h-[21px] flex-1 border border-r-0 border-[#d5d6da] bg-white">
          <Tool label="不扩展" w="w-[51px] bg-[#3d97f7]"><Glyph><circle cx="8" cy="8" r="7" stroke="#fff" strokeWidth="1.600" /><path d="M3.500 12.500 L12.500 3.500" stroke="#fff" strokeWidth="1.600" /></Glyph></Tool>
          <Tool label="纵向扩展" w="w-[51px]"><GridIcon /></Tool>
          <Tool label="横向扩展" w="w-[51px]"><GridIcon across /></Tool>
        </div>
      </div>
      <ParentSelect id="left-parent" label="左父格" />
      <ParentSelect id="top-parent" label="上父格" />
      <Section title="高级" />
      <div className="pb-[15px] pt-[5px]">
        <Check label="横向可伸展" />
        <Check label="纵向可伸展" />
      </div>
      <Section title="扩展后排序" />
      <button type="button" className="ml-2.5 mt-[5px] flex h-[18px] w-[220px] items-center border border-r-0 border-b-0 border-[#d5d6da] bg-white pl-[58px] text-xs leading-3 text-black">
        <Glyph><path d="M8 2 V14 M2 8 H14" strokeWidth="1.800" /></Glyph>
        <span className="ml-1">添加主要排列序</span>
      </button>
    </aside>
  );
}

function Designer() {
  return (
    <section className="absolute bottom-0 left-[31px] right-0 top-[334px] flex flex-col overflow-hidden border-l border-t border-[#1b7ac8] bg-white shadow-[0_0_14px_rgba(0,0,0,0.35)]">
      <header className="flex h-[30px] shrink-0 items-center pl-2 text-black">
        <Logo className="size-4" />
        <h1 className="ml-[5px] flex gap-4 whitespace-pre font-['Roboto','Noto_Sans_CJK_SC',sans-serif] text-[13px] font-normal">
          <span>FineReport 11.0.17 stable 2023-06-09 @默认[本地目录]</span>
          <span>C:\Users\Administrator\Desktop\向\软件\FineReport_11.0\webapps\webroot\WEB-INF\reportlets/测试/WorkBook1.cpt</span>
        </h1>
        <div className="ml-auto flex items-center gap-[35px] pr-px">
          <button type="button" aria-label="最小化" className="h-px w-2.5 bg-black" />
          <button type="button" aria-label="最大化" className="size-2.5 border border-black" />
          <button type="button" aria-label="关闭窗口"><svg viewBox="0 0 11 11" className="size-[11px]"><path d="M0 0 L11 11 M11 0 L0 11" stroke="#000" /></svg></button>
        </div>
      </header>
      <div className="flex h-6 shrink-0 items-center bg-[#dfdfe1] pl-[25px] text-xs text-black">
        <nav className="flex gap-[29px]">
          {MENUS.map(m => <button key={m} type="button"><Mix text={m} /></button>)}
        </nav>
        <p className="ml-auto"><Mix text="日志 | 严重:11:43:20 SwingWorker-pool-6-thread-5 ERROR [standard] 错误代码:31300012 创建数据连接..." /></p>
        <button type="button" aria-label="搜索日志" className="ml-3"><Search size={15} strokeWidth={1.6} color="#444" /></button>
        <button type="button" aria-label="通知" className="ml-2.5"><Bell size={14} color="#333" fill="#333" /></button>
        <button type="button" className="ml-1.5 h-full w-[88px] bg-[#b8dcf3] pl-[15px]"><Mix text="3977714" /></button>
      </div>
      <div className="flex min-h-0 flex-1">
        <FilePanel />
        <div className="flex w-2.5 shrink-0 flex-col items-center bg-[#e8e8ea] pt-3">
          <span className="size-0 border-y-4 border-r-[5px] border-y-transparent border-r-[#999]" />
        </div>
        <main className="flex min-w-0 flex-1 flex-col">
          <MainTools />
          <FontBar />
          <Canvas />
          <div className="h-2.5 bg-[#d9d9db]" />
          <Sheet />
        </main>
        <SideStrip />
        <PropertyPanel />
      </div>
    </section>
  );
}

function Markup() {
  return (
    <svg className="pointer-events-none absolute inset-0 size-full" aria-hidden="true">
      <g fill="none" stroke="#fe2012" strokeWidth="3">
        <rect x="48.500" y="35.500" width="675" height="309" rx="2" />
        <rect x="297.500" y="571.500" width="392" height="150" rx="2" />
        <ellipse cx="611" cy="670" rx="36" ry="10" strokeWidth="2.500" />
        <ellipse cx="520" cy="692" rx="31" ry="15.500" strokeWidth="2.500" />
        <ellipse cx="1483" cy="490" rx="113" ry="18.500" strokeWidth="2.500" />
      </g>
      <path d="M439 385 L451 396 L447.500 397 L492 546.500 L491 547 L442.500 402.500 L435.500 405 Z" fill="#fe2012" />
      <path d="M1420 724 L1446 719 V724 Z" fill="#f4713a" />
    </svg>
  );
}

export default function App() {
  return (
    <div className={clsx("relative h-screen overflow-hidden bg-white", SIM)}>
      <PreviewBar />
      <div className="ml-[5px] flex h-full border-l border-[#e0e0e2]">
        <div className="flex-1 pl-[72px] pt-[25px]"><ReportTable /></div>
        <div className="flex w-4 flex-col items-center bg-[#f1f1f1] pt-1.5">
          <Caret className="rotate-180 border-t-[#999]" />
          <div className="mt-1.5 w-[13px] flex-1 bg-[#c1c1c1]" />
        </div>
      </div>
      <span className="absolute left-px top-[370px] size-0 border-y-4 border-l-4 border-y-transparent border-l-[#888]" />
      <Designer />
      <button type="button" aria-label="帮助中心" className="absolute bottom-[23px] right-12 size-9 rounded-full bg-[#3d97f7] text-2xl leading-9 text-white">
        ?
        <span className="absolute right-0.5 top-0 size-2 rounded-full bg-[#ee1c1c]" />
      </button>
      <Markup />
      <p className="absolute bottom-1.5 right-4 text-lg leading-6 text-[#a3a3a8] [text-shadow:1px_1px_0_#fff]">CSDN @哈哈的二哈</p>
    </div>
  );
}
